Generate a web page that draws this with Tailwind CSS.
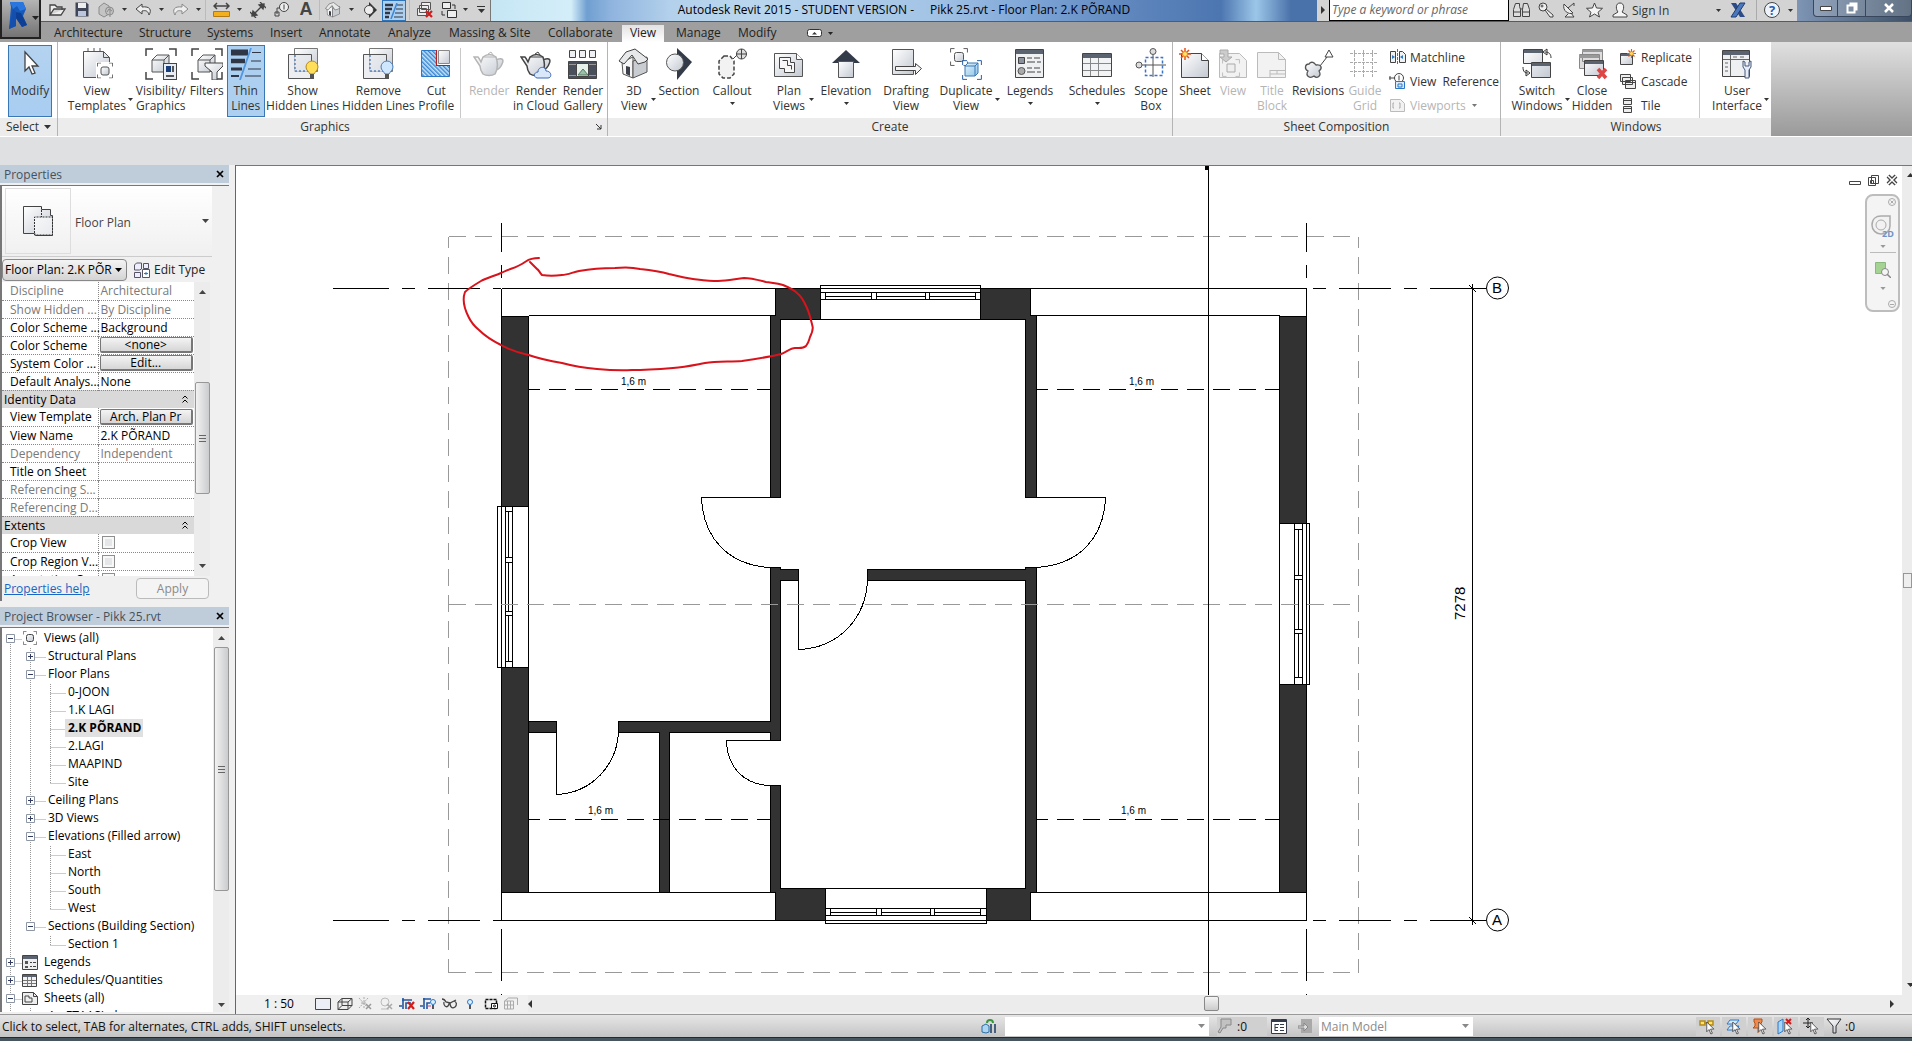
<!DOCTYPE html>
<html lang="en">
<head>
<meta charset="utf-8">
<title>Autodesk Revit 2015</title>
<script src="https://cdn.jsdelivr.net/npm/@tailwindcss/browser@4"></script>
</head>
<body class="flex h-screen flex-col overflow-hidden bg-[#f0f0f0] font-['Open_Sans','Noto_Sans',sans-serif] text-[12px] leading-[15px] text-[#222]">

<svg class="absolute h-0 w-0" aria-hidden="true">
  <defs>
    <linearGradient id="g" x1="0" y1="0" x2="1" y2="1"><stop offset="0" stop-color="#fff"/><stop offset="1" stop-color="#c3c9d2"/></linearGradient>
    <linearGradient id="gb" x1="0" y1="0" x2="1" y2="1"><stop offset="0" stop-color="#e3f3fc"/><stop offset="1" stop-color="#8cc4e8"/></linearGradient>
    <pattern id="hatch" width="3" height="3" patternUnits="userSpaceOnUse" patternTransform="rotate(-45)"><rect width="3" height="3" fill="#cfe5f7"/><rect width="1.5" height="3" fill="#3a8ad6"/></pattern>
    <symbol id="dn" viewBox="0 0 7 4"><path d="M0 0h7L3.5 4z" fill="currentColor"/></symbol>
    <symbol id="plus" viewBox="0 0 9 9"><path d="M.5.5h8v8h-8z" fill="#fff" stroke="#8c96a5"/><path d="M2 4.500h5M4.500 2v5" stroke="#333c60"/></symbol>
    <symbol id="minus" viewBox="0 0 9 9"><path d="M.5.5h8v8h-8z" fill="#fff" stroke="#8c96a5"/><path d="M2 4.500h5" stroke="#333c60"/></symbol>
    <symbol id="cursor" viewBox="0 0 12 18"><path d="M1 1v13l3-3 2.500 6 2-1L6 10.500h4.500z" fill="#fff" stroke="#333"/></symbol>
    <symbol id="sun" viewBox="0 0 12 12"><path d="M6 0v12M0 6h12M2 2l8 8M10 2l-8 8" stroke="#e2521b" stroke-width="1.500"/><circle cx="6" cy="6" r="2.500" fill="#ffe46b" stroke="#e88a1c"/></symbol>
    <symbol id="frame" viewBox="0 0 32 32"><path d="M1 8V1h7M24 1h7v7M31 24v7h-7M8 31H1v-7" fill="none" stroke="currentColor" stroke-width="1.500"/></symbol>
    <symbol id="house" viewBox="0 0 32 32"><path d="M4 14l11-5v21L5 26z" fill="#f5f5f5" stroke="#555"/><path d="M15 13l14-4v15l-14 6z" fill="#c9ccd1" stroke="#555"/><path d="M1 13L8 4l9-3 13 10-3 3-7 2-6-9-8 9z" fill="#e6e8ea" stroke="#444"/><path d="M8 18l4 1v9l-4-2z" fill="#3b3f49"/></symbol>
    <symbol id="teapot" viewBox="0 0 32 32"><path d="M10 9c4-3 9-3 13 0 2 6 2 12-1 17-3 2-9 2-12 0-2-3-3-6-3-8C5 15 3 12 1 9l4 0c1 1 2 3 3 5zM23 12c7-3 8 0 6 4-1 3-3 5-6 6" fill="url(#g)" stroke="currentColor" stroke-width="1.500"/><path d="M10 9h13M15 6l3-2 2 3" fill="none" stroke="currentColor"/></symbol>
  </defs>
</svg>

<!-- Title bar -->
<header class="relative z-10 flex h-[22px] shrink-0 border-b border-[#525c68] bg-[#d3d3d3]">
  <button aria-label="Application menu" class="flex h-[39px] w-[41px] shrink-0 items-start gap-1 border-2 border-t-0 border-[#222] bg-linear-to-b from-[#b4b4b4] to-[#747474] pl-[5px]">
    <svg width="21" height="30" viewBox="0 0 21 30"><path d="M3 2l13 0 3 7-3 7 4 9-5 2-6-10v9l-7 3L4 7z" fill="#1659b8"/><path d="M3 2h13l3 7-6 2-3-5-4 3z" fill="#2a76df"/><path d="M8 12l6 1 6 12-5 2-7-10z" fill="#0d3f96"/><path d="M2 29l4-20 3 3v14z" fill="#144fae"/></svg>
    <svg class="mt-4 text-[#222]" width="7" height="4"><use href="#dn"/></svg>
  </button>
  <div class="flex h-[21px] w-[449px] shrink-0 items-center pb-[2px] pl-[5px] text-[#333]">
    <button aria-label="Open" class="flex w-6 justify-center"><svg width="18" height="14" fill="none" stroke="#444" stroke-width="1.300"><path d="M1 12V2h5l2 2h5v3M1 12h11l4-6H5z" fill="#eee"/></svg></button>
    <button aria-label="Save" class="flex w-6 justify-center"><svg width="14" height="15"><path d="M.5.5h11l2 2v12H.5z" fill="#3f4658"/><path d="M3 1h8v5H3z" fill="#eee"/><path d="M3 9h8v5H3z" fill="#b9c6dd"/></svg></button>
    <button aria-label="Synchronize" class="flex w-6 justify-center"><svg width="17" height="16" fill="#c4c4c4" stroke="#8b8b8b"><path d="M1 5l5-4 5 3v8l-5 3-5-3z"/><circle cx="11.500" cy="9" r="4"/><path d="M9 10l2-3 3 2M12 5v10"/></svg></button>
    <span class="flex w-[13px] justify-center"><svg width="5" height="3"><use href="#dn"/></svg></span>
    <button aria-label="Undo" class="flex w-6 justify-center"><svg width="17" height="14"><path d="M7 1L1 6l6 5V8c4-1 6 0 7 4 3-5 1-9-7-8z" fill="#eee" stroke="#444"/></svg></button>
    <span class="flex w-[13px] justify-center"><svg width="5" height="3"><use href="#dn"/></svg></span>
    <button aria-label="Redo" class="flex w-6 justify-center"><svg width="17" height="14"><path d="M10 1l6 5-6 5V8C6 7 4 8 3 12 0 7 2 3 10 4z" fill="#eee" stroke="#888"/></svg></button>
    <span class="flex w-[13px] justify-center"><svg width="5" height="3"><use href="#dn"/></svg></span>
    <span class="mr-[3px] h-5 w-px bg-[#bbb]"></span>
    <button aria-label="Measure" class="flex w-6 justify-center"><svg width="17" height="15"><path d="M1 4h15M4 1L1 4l3 3M13 1l3 3-3 3" fill="none" stroke="#444" stroke-width="1.500"/><path d="M.5 9.500h16v5H.5z" fill="#f2b01e" stroke="#b27a10"/></svg></button>
    <span class="flex w-[13px] justify-center"><svg width="5" height="3"><use href="#dn"/></svg></span>
    <button aria-label="Aligned dimension" class="flex w-6 justify-center"><svg width="16" height="16" stroke="#444" stroke-width="1.300" fill="#444"><path d="M2 14L14 2M0 10l6 6M10 0l6 6"/><path d="M2 14l1-5 4 4zM14 2l-1 5-4-4z"/></svg></button>
    <button aria-label="Tag" class="flex w-6 justify-center"><svg width="16" height="15" fill="none" stroke="#444"><circle cx="10" cy="5" r="4.500" fill="#eee"/><path d="M10 2.500v5M6 6H3v6M1 10h4v4H1z"/></svg></button>
    <button aria-label="Text" class="flex w-6 justify-center font-['Liberation_Sans',sans-serif] text-[18px] font-bold text-[#444]">A</button>
    <span class="mx-px h-5 w-px bg-[#bbb]"></span>
    <button aria-label="Default 3D view" class="flex w-6 justify-center"><svg width="16" height="16" viewBox="0 0 32 32"><use href="#house"/></svg></button>
    <span class="flex w-[13px] justify-center"><svg width="5" height="3"><use href="#dn"/></svg></span>
    <button aria-label="Section" class="flex w-6 justify-center"><svg width="14" height="16"><path d="M6 0l8 8-8 8z" fill="#333"/><circle cx="6" cy="8" r="4.500" fill="#eee" stroke="#444"/></svg></button>
    <button aria-label="Thin Lines" class="mt-[2px] flex h-[21px] w-6 items-center justify-center border border-[#2f74b8] bg-[#aed0f0]"><svg width="18" height="16" stroke="#2f3645"><path d="M0 2h8M0 6h7M0 10h5M0 14h4" stroke-width="2.500"/><path d="M12 2h6M11 6h7M10 10h8M9 14h9"/><path d="M12 0L6 16" stroke="#3c86d8" stroke-width="1.500"/></svg></button>
    <span class="mx-[3px] h-5 w-px bg-[#bbb]"></span>
    <button aria-label="Close hidden" class="flex w-6 justify-center"><svg width="17" height="16" fill="#eee" stroke="#555"><path d="M4.500.5h9v7h-9zM2.500 3.500h9v7h-9zM.5 6.500h9v7h-9z"/><path d="M9 9l6 6M15 9l-6 6" stroke="#d21c1c" stroke-width="2.200"/></svg></button>
    <button aria-label="Switch windows" class="flex w-6 justify-center"><svg width="17" height="16" fill="#eee" stroke="#333"><path d="M1.500.5h8v6h-8zM6.500 8.500h9v7h-9z"/><path d="M11 3h3v4M1 9v4h3" fill="none"/></svg></button>
    <span class="flex w-2 justify-center"><svg width="5" height="3"><use href="#dn"/></svg></span>
    <button aria-label="Customize" class="ml-2 flex flex-col items-center gap-[2px]"><span class="h-px w-2 bg-[#333]"></span><svg width="7" height="4"><use href="#dn"/></svg></button>
  </div>
  <div class="flex min-w-0 flex-1 items-center justify-center gap-4 overflow-hidden border-l border-[#777] bg-[linear-gradient(90deg,#c6e6f4_0,#d4eef9_80px,#6f9fd0_96px,#8fb4de_120px,#b4d1ec_180px,#b9d6ee_260px,#a4c4e6_440px,#7da5d6_540px,#5f86bd_640px,#4c76b0_730px,#9cc6e8_765px,#4a72aa_800px)] pb-[2px] whitespace-pre text-black">
    <span>Autodesk Revit 2015 - STUDENT VERSION -</span><span>Pikk 25.rvt - Floor Plan: 2.K PÕRAND</span>
  </div>
  <div class="flex w-[480px] shrink-0 items-center pb-px text-[#333]">
    <span class="flex w-3 justify-center"><svg width="4" height="8"><path d="M0 0l4 4-4 4z" fill="#333"/></svg></span>
    <input aria-label="Search" placeholder="Type a keyword or phrase" class="h-[21px] w-[180px] border border-t-0 border-black bg-white px-[2px] italic placeholder:text-[#666]">
    <button aria-label="Find" class="ml-1 flex w-[25px]"><svg width="17" height="16" fill="#ddd" stroke="#444"><path d="M2.500 1.500h4v3l1 3v7h-7v-7zM10.500 1.500h4l2 6v7h-7v-7zM7 7h3M1 10h6M10 10h6"/></svg></button>
    <button aria-label="Key" class="flex w-6"><svg width="17" height="16" fill="#eee" stroke="#444"><circle cx="5" cy="5" r="4"/><path d="M8 7l7 6v2h-3l-5-7z"/><circle cx="4" cy="4" r="1"/></svg></button>
    <button aria-label="Communication" class="flex w-6"><svg width="15" height="16" fill="#eee" stroke="#444"><path d="M2 2l9 9c-4 2-11-2-9-9zM6 6l6-5M12 1v3M6 12l-3 3h9l-3-4"/></svg></button>
    <button aria-label="Favorites" class="flex w-[26px]"><svg width="17" height="16"><path d="M8.500 1l2 5 6 .3-4.500 4L13.500 15l-5-3-5 3L5 10.300.5 6.300l6-.3z" fill="#f5f5f5" stroke="#444"/></svg></button>
    <button class="flex w-[104px] items-center gap-1"><svg width="16" height="16" fill="#f5f5f5" stroke="#444"><path d="M8 1c5 0 4 7 2 9l5 3v2H1v-2l5-3C4 8 3 1 8 1z"/></svg>Sign In</button>
    <svg width="5" height="3"><use href="#dn"/></svg>
    <button aria-label="Exchange" class="ml-[9px] w-[26px]"><svg width="16" height="16"><path d="M1 1h5l9 14h-5z" fill="#2b4c86"/><path d="M10 1h5L6 15H1z" fill="#4a78bd" stroke="#1f3c70"/></svg></button>
    <span class="h-5 w-px bg-[#aaa]"></span>
    <button aria-label="Help" class="ml-[7px] flex h-4 w-4 items-center justify-center rounded-full border border-[#444] bg-[#eef4fb] text-[13px] font-bold text-[#2b5ba8]">?</button>
    <svg class="ml-2" width="5" height="3"><use href="#dn"/></svg>
  </div>
  <div class="flex w-[115px] shrink-0 bg-linear-to-r from-[#7e95b4] to-[#3c4f66] pl-4">
    <div class="flex h-[17px] flex-1 rounded-b border border-t-0 border-[#38475c] bg-white/20 text-white">
      <button aria-label="Minimize" class="flex w-6 items-end justify-center border-r border-[#38475c] pb-[5px]"><svg width="12" height="5"><path d="M.5.5h11v4H.5z" fill="#fff" stroke="#444"/></svg></button>
      <button aria-label="Restore" class="flex w-7 items-center justify-center border-r border-[#38475c]"><svg width="12" height="12" fill="none"><path d="M3.500 1.500h7v7M1.500 3.500h7v7h-7z" stroke="#fff" stroke-width="2"/></svg></button>
      <button aria-label="Close" class="flex flex-1 items-center justify-center"><svg width="12" height="10"><path d="M2 1l8 8M10 1L2 9" stroke="#fff" stroke-width="2.500"/></svg></button>
    </div>
  </div>
</header>

<!-- Ribbon tabs -->
<nav class="flex h-5 shrink-0 items-end bg-[#9f9f9f] pl-[54px] whitespace-nowrap text-[#222]">
  <a href="#" class="w-[85px] pb-[2px]">Architecture</a>
  <a href="#" class="w-[68px] pb-[2px]">Structure</a>
  <a href="#" class="w-[63px] pb-[2px]">Systems</a>
  <a href="#" class="w-[49px] pb-[2px]">Insert</a>
  <a href="#" class="w-[69px] pb-[2px]">Annotate</a>
  <a href="#" class="w-[61px] pb-[2px]">Analyze</a>
  <a href="#" class="w-[99px] pb-[2px]">Massing &amp; Site</a>
  <a href="#" class="w-[74px] pb-[2px]">Collaborate</a>
  <a href="#" class="h-[17px] w-[42px] bg-linear-to-b from-[#e2e2e2] to-white text-center">View</a>
  <a href="#" class="ml-3 w-[62px] pb-[2px]">Manage</a>
  <a href="#" class="w-[69px] pb-[2px]">Modify</a>
  <button aria-label="Minimize ribbon" class="flex items-center gap-[6px] pb-[5px]"><svg width="15" height="8"><rect x=".5" y=".5" width="14" height="7" rx="2" fill="#fff" stroke="#333"/><path d="M5 5.500h5L7.500 3z" fill="#333"/></svg><svg width="5" height="3"><use href="#dn"/></svg></button>
</nav>

<!-- Ribbon -->
<section class="flex h-[94px] shrink-0 bg-linear-to-b from-[#e0e0e0] to-[#9a9a9a] whitespace-nowrap text-[#333]">
  <div class="flex w-[58px] flex-col border-r border-[#b4b4b4] bg-white">
    <div class="flex h-[76px] pt-[3px] pl-2">
      <button class="flex h-[72px] w-11 flex-col items-center border border-[#3a78b5] bg-linear-to-b from-[#b4d3f0] to-[#a8cdf0] pt-[2px]"><svg width="32" height="32"><path d="M11 4v19l4-4 3 7 3-1-3-7h6z" fill="#fff" stroke="#444" stroke-width="1.300"/></svg><span class="mt-[3px]">Modify</span></button>
    </div>
    <button class="flex h-[18px] items-center gap-[5px] bg-[#ececec] pb-px pl-[6px]">Select <svg width="7" height="4"><use href="#dn"/></svg></button>
  </div>

  <div class="flex w-[550px] flex-col border-r border-[#b4b4b4] bg-white">
    <div class="flex h-[76px] items-start pt-[6px] pl-[6px]">
      <button class="flex w-[66px] flex-col items-center"><svg width="32" height="32"><path d="M2.500 3.500h20l6 6v20h-26z" fill="url(#g)" stroke="#555"/><path d="M22.500 3.500v6h6M7 0v4M13 0v4M19 0v4" fill="none" stroke="#555"/><path d="M15 14h16v17H15z" fill="#fff"/><svg x="16" y="14" width="16" height="17" viewBox="0 0 32 32" class="text-[#444]"><use href="#frame"/></svg><rect x="20" y="19" width="8" height="8" rx="2" fill="url(#g)" stroke="#555"/></svg><span class="mt-[3px]">View</span><span class="flex items-start">Templates<svg class="-mr-[7px] ml-[2px]" width="5" height="3"><use href="#dn"/></svg></span></button>
      <button class="flex w-[62px] flex-col items-center"><svg width="32" height="32" class="text-[#444]"><use href="#frame"/><path d="M7 12l5-5h12v12l-5 5H7zM7 12h12v12M19 12l5-5" fill="url(#g)" stroke="#555"/><rect x="18.500" y="15.500" width="13" height="16" fill="#e8edf3" stroke="#444"/><path d="M21 18h5v6h-5z" fill="#173d7a"/><path d="M28 18v6M21 28h8" stroke="#555" stroke-width="2"/></svg><span class="mt-[3px]">Visibility/</span><span>Graphics</span></button>
      <button class="flex w-[30px] flex-col items-center"><svg width="32" height="32" class="text-[#444]"><use href="#frame"/><path d="M7 12l5-5h12v12l-5 5H7zM7 12h12v12M19 12l5-5" fill="url(#g)" stroke="#555"/><path d="M14 15h18v3l-6 6v8h-5v-8l-7-6z" fill="url(#g)" stroke="#444"/></svg><span class="mt-[3px]">Filters</span></button>
      <button class="-mt-[3px] ml-[5px] flex h-[72px] w-[38px] flex-col items-center border border-[#3a78b5] bg-[#aed0f0] pt-[2px]"><svg width="32" height="32" stroke="#2f3645"><path d="M1 4.500h17" stroke-width="6"/><path d="M1 13h14" stroke-width="4.500"/><path d="M1 21h11" stroke-width="3"/><path d="M1 28h8" stroke-width="2"/><path d="M22 4.500h9M21 13h10M18 21h13M15 28h16"/><path d="M21 0l-11 32" stroke="#5196e0" stroke-width="1.800"/></svg><span class="mt-[3px]">Thin</span><span>Lines</span></button>
      <button class="flex w-[76px] flex-col items-center"><svg width="32" height="32"><path d="M7.500.5h23v23h-23z" fill="url(#g)" stroke="#777"/><path d="M1.500 6.500h23v24h-23z" fill="#e4e7eb" stroke="#555" fill-opacity=".7"/><path d="M8 7v16h16" fill="none" stroke="#1d56a8" stroke-dasharray="2 2"/><path d="M23 26c-1-2-4-4-4-7a6 6 0 0 1 12 0c0 3-3 5-4 7z" fill="#ffdf5a" stroke="#b48a1a"/><path d="M23 26h4v5h-4z" fill="#555"/></svg><span class="mt-[3px]">Show</span><span>Hidden Lines</span></button>
      <button class="flex w-[76px] flex-col items-center"><svg width="32" height="32"><path d="M7.500.5h23v23h-23z" fill="url(#g)" stroke="#777"/><path d="M1.500 6.500h23v24h-23z" fill="#e4e7eb" stroke="#555" fill-opacity=".7"/><path d="M8 7v16h16" fill="none" stroke="#1d56a8" stroke-dasharray="2 2"/><path d="M23 26c-1-2-4-4-4-7a6 6 0 0 1 12 0c0 3-3 5-4 7z" fill="#cfe6ff" stroke="#4a7cc0"/><path d="M23 26h4v5h-4z" fill="#555"/></svg><span class="mt-[3px]">Remove</span><span>Hidden Lines</span></button>
      <button class="flex w-10 flex-col items-center"><svg width="32" height="32"><path d="M1.500 2.500h28v26h-28z" fill="url(#hatch)" stroke="#2a79c9"/><path d="M17 0h15v18H17z" fill="#fff"/><path d="M18.500 2.500h11v13h-11z" fill="url(#g)" stroke="#888"/><path d="M16.500 2v15.500H30" fill="none" stroke="#b31f1f" stroke-width="1.200"/></svg><span class="mt-[3px]">Cut</span><span>Profile</span></button>
      <span class="mx-1 h-[70px] w-px bg-[#c9c9c9]"></span>
      <button disabled class="flex w-12 flex-col items-center text-[#b5b5b5]"><svg width="32" height="32"><use href="#teapot"/></svg><span class="mt-[3px]">Render</span></button>
      <button class="flex w-[46px] flex-col items-center"><svg width="32" height="32" class="text-[#444]"><use href="#teapot"/><path d="M17 30c-4-1-3-6 1-6 0-6 8-6 8-1 6 0 6 7 2 7z" fill="#d9e7fa" stroke="#3a66b5"/></svg><span class="mt-[3px]">Render</span><span>in Cloud</span></button>
      <button class="flex w-12 flex-col items-center"><svg width="32" height="32" fill="#eef0f3" stroke="#444"><path d="M2.500 2.500h6v7h-6zM12.500 2.500h6v7h-6zM22.500 2.500h6v7h-6z"/><path d="M1.500 13.500h28v17h-28z" fill="#4a4f5c"/><path d="M2 16.500h27M2 27.500h27" stroke="#999"/><path d="M9.500 15.500h12v13h-12z" fill="#e7f2ea"/><path d="M11 27l5-6 5 6z" fill="#9bc0a6" stroke="#576"/></svg><span class="mt-[3px]">Render</span><span>Gallery</span></button>
    </div>
    <div class="flex h-[18px] items-center bg-[#ececec] pr-[5px] pb-px pl-3"><span class="flex-1 -translate-x-2 text-center">Graphics</span><svg width="6" height="6"><path d="M0 0l5 5M5 1v4H1" fill="none" stroke="#333"/></svg></div>
  </div>

  <div class="flex w-[565px] flex-col border-r border-[#b4b4b4] bg-white">
    <div class="flex h-[76px] items-start pt-[6px] pl-px">
      <button class="flex w-[50px] flex-col items-center"><svg width="32" height="32"><use href="#house"/></svg><span class="mt-[3px]">3D</span><span class="flex items-start">View<svg class="-mr-[9px] ml-1" width="5" height="3"><use href="#dn"/></svg></span></button>
      <button class="flex w-10 flex-col items-center"><svg width="32" height="32"><path d="M14 0l15 14-15 18z" fill="#333a48"/><circle cx="12" cy="14.500" r="8.500" fill="url(#g)" stroke="#555"/></svg><span class="mt-[3px]">Section</span></button>
      <button class="flex w-[66px] flex-col items-center"><svg width="32" height="32" fill="none" stroke="#444"><path d="M8 8h6l4 5v13l-4 4H7l-4-4V13z" stroke-dasharray="4 2" stroke-width="1.500" fill="#f2f2f2"/><path d="M17 11l5-5"/><circle cx="25.500" cy="6" r="5" fill="#ddd"/><path d="M20 6h11M25.500 1v10"/></svg><span class="mt-[3px]">Callout</span><svg class="mt-1" width="5" height="3"><use href="#dn"/></svg></button>
      <button class="flex w-12 flex-col items-center"><svg width="32" height="32"><path d="M1.500 5.500h22l6 6v17h-28z" fill="url(#g)" stroke="#555"/><path d="M23.500 5.500v6h6" fill="#fff" stroke="#555"/><path d="M6.500 9.500h11v5h4v10h-10v-4h-5z" fill="#f8f8f8" stroke="#444"/><path d="M9.500 12.500h5v5h4v4" fill="none" stroke="#444"/></svg><span class="mt-[3px]">Plan</span><span class="flex items-start">Views<svg class="-mr-[9px] ml-1" width="5" height="3"><use href="#dn"/></svg></span></button>
      <button class="flex w-[66px] flex-col items-center"><svg width="32" height="32"><path d="M16 2l14 13H2z" fill="#333a48"/><path d="M8.500 13.500h15v16h-15z" fill="url(#g)" stroke="#555"/></svg><span class="mt-[3px]">Elevation</span><svg class="mt-1" width="5" height="3"><use href="#dn"/></svg></button>
      <button class="flex w-[54px] flex-col items-center"><svg width="32" height="32"><path d="M2.500 1.500h21v25h-21z" fill="url(#g)" stroke="#555"/><path d="M5.500 18.500h20v-3l6 5-6 6v-4h-20z" fill="#f4f4f4" stroke="#444"/></svg><span class="mt-[3px]">Drafting</span><span>View</span></button>
      <button class="flex w-[66px] flex-col items-center"><svg width="32" height="32"><svg width="18" height="18" viewBox="0 0 32 32" class="text-[#444]"><use href="#frame"/></svg><rect x="4.500" y="4.500" width="9" height="9" rx="2" fill="url(#g)" stroke="#555"/><svg x="12" y="12" width="20" height="20" viewBox="0 0 32 32" class="text-[#1d56a8]"><use href="#frame"/></svg><path d="M15 18l3-3h10v10l-3 3H15zM15 18h10v10M25 18l3-3" fill="url(#gb)" stroke="#3a78b5"/></svg><span class="mt-[3px]">Duplicate</span><span class="flex items-start">View<svg class="-mr-[21px] ml-4" width="5" height="3"><use href="#dn"/></svg></span></button>
      <button class="flex w-[62px] flex-col items-center"><svg width="32" height="32"><path d="M1.500 1.500h28v28h-28z" fill="#eef0f2" stroke="#444"/><path d="M2 2h27v4H2z" fill="#5b6270"/><path d="M4.500 9.500h6v6h-6z" fill="#8b919c" stroke="#444"/><circle cx="7.500" cy="23" r="3.500" fill="#aaa" stroke="#555"/><path d="M13 10h5m2 0h6M13 14h8m2 0h4M13 20h5m2 0h6M13 24h8m2 0h4" stroke="#444"/></svg><span class="mt-[3px]">Legends</span><svg class="mt-1" width="5" height="3"><use href="#dn"/></svg></button>
      <button class="flex w-[72px] flex-col items-center"><svg width="32" height="32"><path d="M1.500 5.500h29v23h-29z" fill="#f2f3f4" stroke="#444"/><path d="M2 6h28v4H2z" fill="#5b6270"/><path d="M2 15.500h28M2 22.500h28M9.500 10v18M17.500 10v18" stroke="#888"/></svg><span class="mt-[3px]">Schedules</span><svg class="mt-1" width="5" height="3"><use href="#dn"/></svg></button>
      <button class="flex w-9 flex-col items-center"><svg width="32" height="32" fill="none" stroke="#555"><circle cx="18" cy="3.500" r="3" fill="#ddd"/><circle cx="4" cy="17" r="3" fill="#ddd"/><path d="M18 7v22M7 17h24"/><path d="M10.500 9.500h17v18h-17z" stroke="#3a74c9" stroke-dasharray="3 2" stroke-width="1.500"/></svg><span class="mt-[3px]">Scope</span><span>Box</span></button>
    </div>
    <div class="flex h-[18px] items-center justify-center bg-[#ececec] pb-px">Create</div>
  </div>

  <div class="flex w-[328px] flex-col border-r border-[#b4b4b4] bg-white">
    <div class="flex h-[76px] items-start pt-[6px] pl-[2px]">
      <button class="flex w-10 flex-col items-center"><svg width="32" height="32"><path d="M2.500 5.500h20l7 7v17h-27z" fill="url(#g)" stroke="#444"/><path d="M22.500 5.500v7h7" fill="#fff" stroke="#444"/><use href="#sun" width="12" height="12"/></svg><span class="mt-[3px]">Sheet</span></button>
      <button disabled class="flex w-9 flex-col items-center text-[#b5b5b5]"><svg width="32" height="32"><path d="M2.500 5.500h20l7 7v17h-27z" fill="#f2f2f2" stroke="#bbb"/><svg x="5" y="11" width="18" height="18" viewBox="0 0 32 32"><use href="#frame"/></svg><path d="M10 16h8v8h-8z" fill="#eee" stroke="#aaa"/><path d="M3 2h8v7h4l-6 5-6-5h4V6H3z" fill="#ccc" stroke="#aaa"/></svg><span class="mt-[3px]">View</span></button>
      <button disabled class="flex w-[42px] flex-col items-center text-[#b5b5b5]"><svg width="32" height="32"><path d="M1.500 4.500h21l7 7v18h-28z" fill="#f2f2f2" stroke="#bbb"/><path d="M22.500 4.500v7h7M14 22.500h15M14 26h15M14 22v7M21 22v4" fill="none" stroke="#bbb"/></svg><span class="mt-[3px]">Title</span><span>Block</span></button>
      <button class="flex w-[50px] flex-col items-center"><svg width="32" height="32"><path d="M27 2l4 7h-8zM25 9l-7 9" fill="none" stroke="#444"/><path d="M7 16c3-4 6 0 7 1 5-1 7 3 3 6 3 5-2 8-5 5-4 3-9 0-6-5-4-2-3-7 1-7z" fill="url(#g)" stroke="#555" stroke-width="1.300"/></svg><span class="mt-[3px]">Revisions</span></button>
      <button disabled class="flex w-11 flex-col items-center text-[#b5b5b5]"><svg width="32" height="32" fill="none" stroke="#aaa" stroke-dasharray="3 1"><path d="M5.500 2v28M14.500 2v28M23.500 2v28M1 5.500h28M1 14.500h28M1 23.500h28"/></svg><span class="mt-[3px]">Guide</span><span>Grid</span></button>
      <div class="ml-[2px] flex flex-col gap-2">
        <button class="flex h-4 items-center gap-1 pt-[2px]"><svg width="17" height="16"><path d="M1.500 2.500h5v11h-5zM10.500 2.500h3l3 3v8h-6z" fill="#f2f2f2" stroke="#444"/><path d="M8.500 0v16" stroke="#2a79c9" stroke-dasharray="3 1"/><path d="M3 6l3 2-3 2zM14 6l-3 2 3 2z" fill="#2a79c9"/></svg>Matchline</button>
        <button class="flex h-4 items-center gap-1 pt-[2px]"><svg width="17" height="16" fill="none" stroke="#444"><circle cx="10" cy="5" r="4.500"/><path d="M0 5h6M1 3v4M10 2.500v5"/><path d="M6.500 8.500h9v7h-9zM9 11h4v3H9z" fill="#dcebfa" stroke="#2a79c9"/></svg>View&nbsp; Reference</button>
        <button disabled class="flex h-4 items-center gap-1 pt-[2px] text-[#b5b5b5]"><svg width="17" height="16"><path d="M1.500 2.500h10l4 4v8h-14z" fill="#f2f2f2" stroke="#bbb"/><path d="M5 6H4v5h1M10 6h1v5h-1" fill="none" stroke="#aaa"/></svg>Viewports<svg class="ml-[2px] text-[#777]" width="5" height="3"><use href="#dn"/></svg></button>
      </div>
    </div>
    <div class="flex h-[18px] items-center justify-center bg-[#ececec] pb-px">Sheet Composition</div>
  </div>

  <div class="flex w-[270px] flex-col bg-white">
    <div class="flex h-[76px] items-start pt-[6px] pl-1">
      <button class="flex w-16 flex-col items-center"><svg width="32" height="32"><path d="M2.500 1.500h19v14h-19zM10.500 14.500h19v15h-19z" fill="url(#g)" stroke="#444"/><path d="M3 2h18v3H3zM11 15h18v3H11z" fill="#5b6270"/><path d="M24 4c4 0 6 2 6 6M22 4l4-3v6zM2 19c0 5 2 6 5 6M5 22l4 3-4 3z" fill="none" stroke="#333"/></svg><span class="mt-[3px]">Switch</span><span class="flex items-start">Windows<svg class="-mr-[7px] ml-[2px]" width="5" height="3"><use href="#dn"/></svg></span></button>
      <button class="flex w-[46px] flex-col items-center"><svg width="32" height="32"><path d="M6.500 1.500h20v12h-20zM3.500 6.500h20v14h-20z" fill="#ddd" stroke="#888"/><path d="M6 2h20v2H6zM3 7h20v3H3z" fill="#999"/><path d="M8.500 12.500h19v15h-19z" fill="url(#g)" stroke="#444"/><path d="M9 13h18v3H9z" fill="#5b6270"/><path d="M22 21l8 9M30 21l-8 9" stroke="#e04545" stroke-width="3.500"/></svg><span class="mt-[3px]">Close</span><span>Hidden</span></button>
      <div class="ml-1 flex w-20 flex-col gap-2">
        <button class="flex h-4 items-center gap-[5px] pt-[2px]"><svg width="17" height="16"><path d="M1.500 4.500h12v11h-12z" fill="url(#g)" stroke="#444"/><path d="M2 5h11v2H2z" fill="#5b6270"/><use href="#sun" x="8" width="9" height="9"/></svg>Replicate</button>
        <button class="flex h-4 items-center gap-[5px] pt-[2px]"><svg width="17" height="16" fill="#eee" stroke="#444"><path d="M1.500 1.500h10v7h-10zM3.500 4.500h10v7h-10zM6.500 7.500h10v8h-10z"/><path d="M7 9.500h9"/></svg>Cascade</button>
        <button class="flex h-4 items-center gap-[5px] pt-[2px]"><svg width="17" height="16" fill="#eee" stroke="#444"><path d="M4.500 1.500h8v6h-8zM4.500 9.500h8v6h-8zM5 3.500h7M5 11.500h7"/></svg>Tile</button>
      </div>
      <span class="h-[70px] w-px bg-[#c9c9c9]"></span>
      <button class="ml-1 flex w-[66px] flex-col items-center"><svg width="32" height="32"><path d="M1.500 2.500h27v26h-27z" fill="#eef0f2" stroke="#444"/><path d="M2 3h26v4H2z" fill="#5b6270"/><path d="M9.500 7v21M2 11.500h26M4 15h3M4 19h3M4 23h3M12 9h4M19 9h4" stroke="#666"/><path d="M22 13v6l2 3v8h4v-8l2-3v-6l-2 1v4h-4v-4z" fill="#e6edf7" stroke="#44597c"/></svg><span class="mt-[3px]">User</span><span class="flex items-start">Interface<svg class="-mr-[7px] ml-[2px]" width="5" height="3"><use href="#dn"/></svg></span></button>
    </div>
    <div class="flex h-[18px] items-center justify-center bg-[#ececec] pb-px">Windows</div>
  </div>
</section>

<div class="h-[29px] shrink-0 border-t border-white bg-[#dfe0e2]"></div>

<main class="flex min-h-0 flex-1">
  <aside class="flex w-[235px] shrink-0 flex-col pr-[6px]">
    <!-- Properties -->
    <section class="flex h-[436px] shrink-0 flex-col">
      <h2 class="flex h-[18px] shrink-0 items-center justify-between bg-[#bfcddb] px-1 text-[#46515c]">Properties<button aria-label="Close properties" class="pr-px"><svg width="8" height="8"><path d="M1 1l6 6M7 1L1 7" stroke="#000" stroke-width="1.700"/></svg></button></h2>
      <div class="mt-[2px] flex min-h-0 flex-1 flex-col border-t border-l-2 border-[#777] bg-[#f0f0f0]">
        <button class="mr-[17px] flex h-[71px] shrink-0 items-center border-b border-[#ccc] bg-linear-to-b from-white to-[#f0f0f0] pl-[3px] text-[#444]">
          <span class="flex h-[66px] w-[66px] items-center justify-center border border-[#ddd]"><svg width="32" height="32"><path d="M1.500 1.500h18v3h9v6h2v20h-17v-2h-12z" fill="url(#g)" stroke="#444"/><path d="M12.500 28v-16h18v18h-18z" fill="#fff" fill-opacity=".6" stroke="#333" stroke-dasharray="2 1"/><path d="M19.500 2v10" stroke="#333" stroke-dasharray="2 1"/></svg></span>
          <span class="ml-1 flex-1 pt-[2px] text-left">Floor Plan</span><svg class="mr-[3px]" width="7" height="4"><use href="#dn"/></svg>
        </button>
        <div class="flex h-[25px] shrink-0 items-center">
          <select aria-label="Instance" class="h-[22px] w-[125px] appearance-none rounded-sm border border-[#888] bg-[linear-gradient(#f4f4f4,#d4d4d4)] pr-3 pl-[2px] text-black"><option>Floor Plan: 2.K PÕR</option></select>
          <svg class="-ml-[12px] text-black" width="7" height="4"><use href="#dn"/></svg>
          <button class="ml-3 flex items-center gap-1 text-[#222]"><svg width="16" height="16" fill="#eef" stroke="#556"><path d="M.5 3l2-2h5v6l-2 1h-5zM9.500 1.500h5v5h-5zM.5 10.500h6v5h-6z"/><path d="M8.500 7.500h7v8h-7z" fill="#fff"/><path d="M10 11.500h4M12 10v3" stroke="#2a79c9"/></svg>Edit Type</button>
        </div>
        <div class="flex min-h-0 flex-1 overflow-hidden text-black">
          <div class="w-[192px] overflow-hidden bg-white">
            <table class="w-full table-fixed border-collapse leading-[17px] whitespace-nowrap">
              <colgroup><col class="w-[96px]"><col></colgroup>
              <tbody>
                <tr class="h-[18px] border-b border-dotted border-[#888] text-[#7a7a7a]"><td class="border-r border-dotted border-[#888] pl-2">Discipline</td><td class="pl-[2px]">Architectural</td></tr>
                <tr class="h-[18px] border-b border-dotted border-[#888] text-[#7a7a7a]"><td class="border-r border-dotted border-[#888] pl-2">Show Hidden ...</td><td class="pl-[2px]">By Discipline</td></tr>
                <tr class="h-[18px] border-b border-dotted border-[#888]"><td class="border-r border-dotted border-[#888] pl-2">Color Scheme ...</td><td class="pl-[2px]">Background</td></tr>
                <tr class="h-[18px] border-b border-dotted border-[#888]"><td class="border-r border-dotted border-[#888] pl-2">Color Scheme</td><td class="px-px"><button class="block h-4 w-full rounded-xs border-2 border-t border-l border-[#777] bg-linear-to-b from-[#f4f4f4] to-[#d6d6d6] leading-[13px]">&lt;none&gt;</button></td></tr>
                <tr class="h-[18px] border-b border-dotted border-[#888]"><td class="border-r border-dotted border-[#888] pl-2">System Color ...</td><td class="px-px"><button class="block h-4 w-full rounded-xs border-2 border-t border-l border-[#777] bg-linear-to-b from-[#f4f4f4] to-[#d6d6d6] leading-[13px]">Edit...</button></td></tr>
                <tr class="h-[18px] border-b border-dotted border-[#888]"><td class="border-r border-dotted border-[#888] pl-2">Default Analys...</td><td class="pl-[2px]">None</td></tr>
                <tr class="h-[18px] bg-[#d9d9d9]"><th colspan="2" class="pl-[2px] text-left font-normal"><span class="flex items-center justify-between pr-[6px]">Identity Data<svg width="6" height="8" fill="none" stroke="#000"><path d="M.5 3.500L3 1l2.500 2.500M.5 7.500L3 5l2.500 2.500"/></svg></span></th></tr>
                <tr class="h-[18px] border-b border-dotted border-[#888]"><td class="border-r border-dotted border-[#888] pl-2">View Template</td><td class="px-px"><button class="block h-4 w-full rounded-xs border-2 border-t border-l border-[#777] bg-linear-to-b from-[#f4f4f4] to-[#d6d6d6] leading-[13px]">Arch. Plan Pr</button></td></tr>
                <tr class="h-[18px] border-b border-dotted border-[#888]"><td class="border-r border-dotted border-[#888] pl-2">View Name</td><td class="pl-[2px]">2.K PÕRAND</td></tr>
                <tr class="h-[18px] border-b border-dotted border-[#888] text-[#7a7a7a]"><td class="border-r border-dotted border-[#888] pl-2">Dependency</td><td class="pl-[2px]">Independent</td></tr>
                <tr class="h-[18px] border-b border-dotted border-[#888]"><td class="border-r border-dotted border-[#888] pl-2">Title on Sheet</td><td></td></tr>
                <tr class="h-[18px] border-b border-dotted border-[#888] text-[#7a7a7a]"><td class="border-r border-dotted border-[#888] pl-2">Referencing S...</td><td></td></tr>
                <tr class="h-[18px] border-b border-dotted border-[#888] text-[#7a7a7a]"><td class="border-r border-dotted border-[#888] pl-2">Referencing D...</td><td></td></tr>
                <tr class="h-[18px] bg-[#d9d9d9]"><th colspan="2" class="pl-[2px] text-left font-normal"><span class="flex items-center justify-between pr-[6px]">Extents<svg width="6" height="8" fill="none" stroke="#000"><path d="M.5 3.500L3 1l2.500 2.500M.5 7.500L3 5l2.500 2.500"/></svg></span></th></tr>
                <tr class="h-[18px] border-b border-dotted border-[#888]"><td class="border-r border-dotted border-[#888] pl-2"><label for="crop">Crop View</label></td><td class="pl-[3px]"><input id="crop" type="checkbox" class="block h-[13px] w-[13px] appearance-none border border-[#8e8f8f] bg-[#e4e6e8] shadow-[inset_0_0_0_2px_#f8f8f8]"></td></tr>
                <tr class="h-[18px] border-b border-dotted border-[#888]"><td class="border-r border-dotted border-[#888] pl-2"><label for="cropr">Crop Region V...</label></td><td class="pl-[3px]"><input id="cropr" type="checkbox" class="block h-[13px] w-[13px] appearance-none border border-[#8e8f8f] bg-[#e4e6e8] shadow-[inset_0_0_0_2px_#f8f8f8]"></td></tr>
                <tr class="h-[18px]"><td class="border-r border-dotted border-[#888] pl-2"><label for="anno">Annotation C...</label></td><td class="pl-[3px]"><input id="anno" type="checkbox" class="block h-[13px] w-[13px] appearance-none border border-[#8e8f8f] bg-[#e4e6e8] shadow-[inset_0_0_0_2px_#f8f8f8]"></td></tr>
              </tbody>
            </table>
          </div>
          <div class="flex w-4 flex-col items-center bg-[#ececec] pt-2 text-[#444]">
            <svg class="rotate-180" width="7" height="4"><use href="#dn"/></svg>
            <div class="mt-[88px] flex h-[112px] w-[15px] flex-col items-center justify-center gap-[2px] rounded-xs border border-[#979797] bg-linear-to-r from-[#f2f2f2] to-[#cbccce]"><span class="h-px w-[7px] bg-[#666]"></span><span class="h-px w-[7px] bg-[#666]"></span><span class="h-px w-[7px] bg-[#666]"></span></div>
            <svg class="mt-[70px]" width="7" height="4"><use href="#dn"/></svg>
          </div>
        </div>
        <div class="flex h-[25px] shrink-0 items-center justify-between pr-[20px] pl-[2px]"><a href="#" class="text-[#1a66c4] underline">Properties help</a><button disabled class="h-[21px] w-[73px] rounded-sm border border-[#bbb] bg-[#f4f4f4] text-[#8a8a8a]">Apply</button></div>
      </div>
    </section>

    <!-- Project browser -->
    <section class="mt-[6px] mb-[2px] flex min-h-0 flex-1 flex-col">
      <h2 class="flex h-[18px] shrink-0 items-center justify-between bg-[#bfcddb] px-1 text-[#46515c]">Project Browser - Pikk 25.rvt<button aria-label="Close browser" class="pr-px"><svg width="8" height="8"><path d="M1 1l6 6M7 1L1 7" stroke="#000" stroke-width="1.700"/></svg></button></h2>
      <div class="mt-[2px] flex min-h-0 flex-1 border-t border-l-2 border-[#777] bg-white text-black">
        <div class="relative min-w-0 flex-1 overflow-hidden pt-px">
          <svg class="absolute top-0 left-0" width="70" height="390" fill="none" stroke="#999" stroke-dasharray="1 1"><path d="M8.500 10v380M8.500 11.500h11M8.500 335.500h11M8.500 353.500h11M8.500 371.500h11M28.500 20v279M28.500 29.500h16M28.500 47.500h16M28.500 173.500h16M28.500 191.500h16M28.500 209.500h16M28.500 299.500h16M28.500 380v10M48.500 56v100M48.500 65.500h16M48.500 83.500h16M48.500 101.500h16M48.500 119.500h16M48.500 137.500h16M48.500 155.500h16M48.500 218v64M48.500 227.500h16M48.500 245.500h16M48.500 263.500h16M48.500 281.500h16M48.500 308v10M48.500 317.500h16"/></svg>
          <ul class="relative leading-[18px] whitespace-nowrap">
            <li class="flex h-[18px] items-center pl-1"><svg width="9" height="9"><use href="#minus"/></svg><svg class="ml-2 bg-white text-[#444]" width="14" height="14"><use href="#frame"/><rect x="3.500" y="3.500" width="7" height="7" rx="2" fill="url(#g)" stroke="#444"/></svg><span class="pl-[7px]">Views (all)</span></li>
            <li class="flex h-[18px] items-center pl-6"><svg width="9" height="9"><use href="#plus"/></svg><span class="pl-[13px]">Structural Plans</span></li>
            <li class="flex h-[18px] items-center pl-6"><svg width="9" height="9"><use href="#minus"/></svg><span class="pl-[13px]">Floor Plans</span></li>
            <li class="h-[18px] pl-[66px]">0-JOON</li>
            <li class="h-[18px] pl-[66px]">1.K LAGI</li>
            <li class="h-[18px] pl-[63px]"><b class="block h-[18px] w-[78px] bg-[#e0e0e0] pl-[3px]">2.K PÕRAND</b></li>
            <li class="h-[18px] pl-[66px]">2.LAGI</li>
            <li class="h-[18px] pl-[66px]">MAAPIND</li>
            <li class="h-[18px] pl-[66px]">Site</li>
            <li class="flex h-[18px] items-center pl-6"><svg width="9" height="9"><use href="#plus"/></svg><span class="pl-[13px]">Ceiling Plans</span></li>
            <li class="flex h-[18px] items-center pl-6"><svg width="9" height="9"><use href="#plus"/></svg><span class="pl-[13px]">3D Views</span></li>
            <li class="flex h-[18px] items-center pl-6"><svg width="9" height="9"><use href="#minus"/></svg><span class="pl-[13px]">Elevations (Filled arrow)</span></li>
            <li class="h-[18px] pl-[66px]">East</li>
            <li class="h-[18px] pl-[66px]">North</li>
            <li class="h-[18px] pl-[66px]">South</li>
            <li class="h-[18px] pl-[66px]">West</li>
            <li class="flex h-[18px] items-center pl-6"><svg width="9" height="9"><use href="#minus"/></svg><span class="pl-[13px]">Sections (Building Section)</span></li>
            <li class="h-[18px] pl-[66px]">Section 1</li>
            <li class="flex h-[18px] items-center pl-1"><svg width="9" height="9"><use href="#plus"/></svg><svg class="ml-[7px]" width="16" height="15"><path d="M.5.5h15v14H.5z" fill="#eee" stroke="#444"/><path d="M1 1h14v3H1z" fill="#5b6270"/><path d="M3 6h3v3H3zM3 11h3v2H3z" fill="#555"/><path d="M8 7.500h2m1 0h3M8 11.500h2m1 0h3" stroke="#444"/></svg><span class="pl-[6px]">Legends</span></li>
            <li class="flex h-[18px] items-center pl-1"><svg width="9" height="9"><use href="#plus"/></svg><svg class="ml-[7px]" width="15" height="13"><path d="M.5.5h14v12H.5z" fill="#f2f2f2" stroke="#444"/><path d="M1 1h13v2H1z" fill="#5b6270"/><path d="M1 6.500h13M1 9.500h13M5.500 3v9M9.500 3v9" stroke="#777"/></svg><span class="pl-[7px]">Schedules/Quantities</span></li>
            <li class="flex h-[18px] items-center pl-1"><svg width="9" height="9"><use href="#minus"/></svg><svg class="ml-[7px]" width="16" height="13" fill="#eee" stroke="#444"><path d="M.5.5h11l4 4v8H.5z"/><path d="M3 4h4v2h3v4H3zM11.500.5v4h4" fill="none"/></svg><span class="pl-[6px]">Sheets (all)</span></li>
            <li class="h-[18px] pl-[46px]">A - ETAASI plaan</li>
          </ul>
        </div>
        <div class="flex w-4 flex-col items-center bg-[#ececec] pt-2 text-[#444]">
          <svg class="rotate-180" width="7" height="4"><use href="#dn"/></svg>
          <div class="mt-[7px] flex h-[244px] w-[15px] flex-col items-center justify-center gap-[2px] rounded-xs border border-[#979797] bg-linear-to-r from-[#f2f2f2] to-[#cbccce]"><span class="h-px w-[7px] bg-[#666]"></span><span class="h-px w-[7px] bg-[#666]"></span><span class="h-px w-[7px] bg-[#666]"></span></div>
          <svg class="mt-auto mb-[5px]" width="7" height="4"><use href="#dn"/></svg>
        </div>
      </div>
    </section>
  </aside>

  <!-- Drawing area -->
  <section class="flex min-w-0 flex-1 flex-col border-l border-[#666] pb-[2px]">
    <div class="flex min-h-0 flex-1 border-t border-[#777]">
      <div class="relative min-w-0 flex-1 overflow-hidden bg-white">
        <svg class="h-full w-full" role="img" aria-label="Floor plan">
          <g transform="translate(-236 -166)" fill="none" stroke="#000" shape-rendering="crispEdges">
            <g stroke="#999" stroke-dasharray="17 9">
              <path d="M448.500 236.500H1358.500"/><path d="M448.500 972.500H1358.500"/><path d="M448.500 236.500V972.500" stroke-dashoffset="6"/><path d="M1358.500 236.500V972.500" stroke-dashoffset="6"/>
            </g>
            <g fill="#323232">
              <path d="M501.500 316.500h27v190h-27zM501.500 667.500h27v54h28v11h-28v160h-27zM618.500 721.500h152v-154h10v2h18v11h-18v160h-10v-8h-101v160h-10v-160h-41zM770.500 315.500h5v-27h45v31h-40v178h-10zM980.500 288.500h50v27h6v182h-11v-178h-45zM867.500 569.500h158v-2h11v325h-6v28h-44v-32h39v-308h-158zM770.500 785.500h10v103h45v32h-50v-28h-5zM1279.500 316.500h27v207h-27zM1279.500 684.500h27v208h-27z"/>
            </g>
            <path d="M501.500 288.500H1306.500M501.500 920.500H1306.500M501.500 288.500v632M1306.500 288.500v632M528.500 315.500h242M528.500 315.500v577M501.500 892.500h269M1036.500 315.500h243M1036.500 892.500h270M780.500 319.500h245M780.500 888.500h245M1279.500 523v161"/>
            <path fill="#fff" d="M497.500 506.500h4v161h-4zM1306.500 523.500h3v161h-3zM820.500 285.500h160v3h-160zM825.500 920.500h161v3h-161z"/>
            <path d="M505.500 506v161M508.500 511v150M512.500 506v161M505 511.500h7M505 557.500h7M505 562.500h7M505 611.500h7M505 615.500h7M505 661.500h7M1294.500 523v161M1298.500 529v148M1302.500 523v161M1294 529.500h8M1294 575.500h8M1294 579.500h8M1294 629.500h8M1294 633.500h8M1294 677.500h8"/>
            <path d="M820 292.500h160M825 296.500h150M820 299.500h160M825.500 292v7M871.500 292v7M876.500 292v7M925.500 292v7M929.500 292v7M975.500 292v7M825 908.500h161M830 912.500h150M825 915.500h161M830.500 908v7M876.500 908v7M881.500 908v7M930.500 908v7M934.500 908v7M980.500 908v7"/>
            <path stroke="#fff" d="M508.500 558v4M508.500 612v3M1298.500 576v3M1298.500 630v3M872 296.500h4M926 296.500h3M877 912.500h4M931 912.500h3"/>
            <path d="M770 497.500H701.500C703 538 728 565 770 567.500M1036 497.500h69.500C1104 538 1079 565 1036 567.500M798.500 580V649.500C840 648 866 617 867.500 580M556.500 732V794.500C592 793 617 765 618.500 732M770 740.500H726.500C727 768 745 785 770 785.500"/>
            <path d="M448.500 604.500H1358.500" stroke="#999" stroke-dasharray="17 9"/>
            <path stroke-dasharray="17 9" stroke-dashoffset="6" d="M528.500 389.500h242M1036.500 389.500h243M528.500 819.500h242M1036.500 819.500h243"/>
            <path d="M501.500 223v29M501.500 265v13M501.500 929v52M501.500 994v2M1306.500 223v29M1306.500 265v13M1306.500 929v52M1306.500 994v2M333 288.500h56M402 288.500h13M428 288.500h52M493 288.500h8M1313 288.500h13M1339 288.500h52M1404 288.500h13M1430 288.500h56M333 920.500h56M402 920.500h13M428 920.500h52M493 920.500h8M1313 920.500h13M1339 920.500h52M1404 920.500h13M1430 920.500h56"/>
            <path d="M1208.500 165V996M1472.500 284V925M1469 285l7 7M1469 917l7 7"/>
            <path d="M1205 166h4v4h-4z" fill="#000" stroke="none"/>
            <g shape-rendering="auto"><circle cx="1497.500" cy="288" r="11"/><circle cx="1497.500" cy="920" r="11"/></g>
          </g>
          <g transform="translate(-236 -166)" class="font-['Liberation_Sans',sans-serif] text-[10px]">
            <text x="621" y="385">1,6 m</text><text x="1129" y="385">1,6 m</text><text x="588" y="814">1,6 m</text><text x="1121" y="814">1,6 m</text>
            <text class="text-[15px]" x="1492" y="293">B</text><text class="text-[15px]" x="1492" y="925">A</text>
            <text class="text-[15px]" transform="translate(1465 620) rotate(-90)">7278</text>
          </g>
          <path transform="translate(-236 -166)" fill="none" stroke="#d8131b" stroke-width="2" stroke-linecap="round" stroke-linejoin="round" d="M539 258C530 258 528 260 525 262C517 268 508 269 501 273C494 276 486 278 481 281C476 284 468 289 465 292C462 300 464 308 468.600 317C471 322 474 326 479 330C484 335 493 341 501 345C510 350 519 353 528.600 355C540 359 550 361 562 363C573 366 585 368 597 369C608 370 620 370.500 632 370C645 370 660 369 673 368C685 367 694 365 705 363C717 361 730 362 742 361C756 359 769 357 781 354C786 352 791 348 795 348C799 348 803 349 806 346C809 342 809 340 810 337C812 333 813 330 812.700 327C811 320 810 315 807 308C804 301 801 296 797 293C793 289 788 287 783 285C777 283 772 283 766 282C758 280 751 278 744 278C735 279 727 281 718 281C709 281 702 280 693 279C685 278 677 276 669 274C659 271 650 270 640 269C632 267 624 267 615 268C603 268 590 269 579 271C573 272 568 275 562 275C555 276 548 276 542 275C539 272 539 270 537 269C534 266 532 264 530 262"/>
        </svg>
        <div class="absolute top-2 right-1 flex items-end gap-[7px]">
          <button aria-label="Minimize view" class="pb-px"><svg width="12" height="4"><path d="M.5.5h11v3H.5z" fill="#fff" stroke="#444"/></svg></button>
          <button aria-label="Restore view"><svg width="11" height="12" fill="#fff" stroke="#444"><path d="M3.500 1.500h7v8h-7zM.5 3.500h7v8h-7zM2.500 6.500h3v3h-3z"/></svg></button>
          <button aria-label="Close view"><svg width="12" height="12"><path d="M2 2l8 8M10 2l-8 8" stroke="#444" stroke-width="4"/><path d="M2 2l8 8M10 2l-8 8" stroke="#fff" stroke-width="1.500"/></svg></button>
        </div>
        <div class="absolute top-7 right-[2px] flex h-[118px] w-[35px] flex-col items-center rounded-lg border-2 border-[#bdbdbd] bg-[#f4f4f4] text-[#999]">
          <button aria-label="Close navigation bar" class="mt-[2px] mr-[2px] self-end"><svg width="8" height="8" fill="none" stroke="#aaa"><circle cx="4" cy="4" r="3.500"/><path d="M2.500 2.500l3 3M5.500 2.500l-3 3"/></svg></button>
          <button aria-label="Steering wheel" class="mt-[9px]"><svg width="24" height="24" fill="none" stroke="#aaa"><path d="M1 10c0-6 4-9 9-9h9v10c0 5-4 8-9 8s-9-4-9-9z" fill="#f2f2f2" stroke-width="1.500"/><circle cx="10" cy="10" r="5"/><text x="11" y="22" fill="#6f93c4" stroke="none" font-size="9" font-weight="bold">2D</text></svg></button>
          <svg class="mt-[6px]" width="6" height="3"><use href="#dn"/></svg>
          <span class="mt-1 h-px w-[26px] bg-[#bbb]"></span>
          <button aria-label="Zoom" class="mt-2"><svg width="17" height="17"><path d="M1.500 1.500h10v11h-10z" fill="#a5d394" stroke="#8ab87c"/><circle cx="11" cy="11" r="3.500" fill="#f4f4f4" stroke="#888"/><path d="M13 13l4 4" stroke="#888" stroke-width="1.500"/></svg></button>
          <svg class="mt-[9px]" width="6" height="3"><use href="#dn"/></svg>
          <button aria-label="Navigation options" class="mt-auto mr-[2px] mb-[2px] self-end"><svg width="8" height="8" fill="none" stroke="#aaa"><circle cx="4" cy="4" r="3.500"/><path d="M2 4.500h4"/></svg></button>
        </div>
      </div>
      <div class="flex w-[10px] shrink-0 flex-col items-end overflow-hidden bg-[#ececec] pt-[7px] text-[#333]">
        <svg class="-mr-[2px] shrink-0 rotate-180" width="7" height="4"><use href="#dn"/></svg>
        <div class="mt-[396px] h-[15px] w-[9px] shrink-0 border border-[#979797] bg-[#eee]"></div>
        <svg class="-mr-[2px] mt-auto mb-2 shrink-0" width="7" height="4"><use href="#dn"/></svg>
      </div>
    </div>
    <!-- View control bar -->
    <div class="flex h-[17px] shrink-0 items-center bg-[#f0f0f0] pl-7">
      <button class="w-[51px] text-left text-black">1 : 50</button>
      <button aria-label="Detail level" class="w-[22px]"><svg width="16" height="12"><path d="M.5.5h15v11H.5z" fill="#eceff5" stroke="#444"/></svg></button>
      <button aria-label="Visual style" class="w-[20px]"><svg width="16" height="12" fill="#eee" stroke="#444"><path d="M1 4l4-3.500h10v7L11 11.500H1zM1 4h10v7.500M11 4l4-3.500M5 .5v7h10M1 11.500l4-4"/></svg></button>
      <button aria-label="Sun path" class="w-[22px]"><svg width="16" height="13"><path d="M4 6h6M7 0v12M2 1l9 10M11 1l-9 10" stroke="#aaa" stroke-dasharray="2 1"/><path d="M9 7l5 5M14 7l-5 5" stroke="#999" stroke-width="1.500"/></svg></button>
      <button aria-label="Shadows" class="w-5"><svg width="15" height="13"><circle cx="6" cy="5" r="4" fill="none" stroke="#bbb"/><path d="M2 12h8" stroke="#bbb"/><path d="M8 7l5 5M13 7l-5 5" stroke="#aaa" stroke-width="1.500"/></svg></button>
      <button aria-label="Crop view" class="w-[21px]"><svg width="17" height="13"><path d="M0 9h3M3 3h10M4 1v11M7 12V6h5" fill="none" stroke="#23569f" stroke-width="1.600"/><path d="M9 5l6 7M15 5l-6 7" stroke="#d21c1c" stroke-width="2.200"/></svg></button>
      <button aria-label="Crop region" class="w-[21px]"><svg width="17" height="13" fill="none"><path d="M0 9h3M3 2h8M4 1v11M7 12V6h3" stroke="#23569f" stroke-width="1.600"/><path d="M7 9h4" stroke="#c2488b"/><circle cx="13" cy="5" r="2.500" fill="#dff0ff" stroke="#2a79c9"/><path d="M13 8v4" stroke="#555" stroke-width="2"/></svg></button>
      <button aria-label="Temporary hide" class="w-[25px]"><svg width="17" height="12" fill="#eee" stroke="#444"><path d="M1 1c2 0 3 1 4 3l4 1 6-3M3 4c-1 3 2 6 4 4 1-1 1-2 1-3M9 5c0 4 2 6 5 4 2-2 2-5-1-6" stroke-width="1.300"/></svg></button>
      <button aria-label="Reveal hidden" class="w-[18px]"><svg width="8" height="12"><circle cx="4" cy="4" r="2.500" fill="#dff0ff" stroke="#2a79c9"/><path d="M4 7v4" stroke="#555" stroke-width="2"/></svg></button>
      <button aria-label="View properties" class="w-5"><svg width="15" height="13" fill="none" stroke="#111"><path d="M1.500 2.500h11v9h-11z" stroke-dasharray="3 1" stroke-width="1.500"/><path d="M7.500 6.500h6v5h-6z" fill="#fff"/><circle cx="10.500" cy="9" r="1"/></svg></button>
      <button aria-label="Analytical model" class="w-6"><svg width="15" height="13" fill="none" stroke="#aaa"><path d="M.5 4l4-3h9v7M.5 4h9v8h-9zM3.500 4v8M6.500 4v8M.5 8h9"/></svg></button>
      <div class="flex h-full flex-1 items-center bg-[#ececec] text-[#333]">
        <svg width="4" height="8"><path d="M4 0v8L0 4z" fill="#333"/></svg>
        <div class="ml-[672px] h-[15px] w-[15px] rounded-xs border border-[#888] bg-linear-to-b from-[#f4f4f4] to-[#ccc]"></div>
        <svg class="mr-[18px] ml-auto" width="4" height="8"><path d="M0 0l4 4-4 4z" fill="#333"/></svg>
      </div>
    </div>
  </section>
</main>

<!-- Status bar -->
<footer class="flex h-[23px] shrink-0 items-center border-t border-[#999] bg-linear-to-b from-[#e6e6e6] to-[#c4c4c4] pl-[2px]">
  <span class="w-[979px] text-[#111]">Click to select, TAB for alternates, CTRL adds, SHIFT unselects.</span>
  <button aria-label="Worksets" class="w-6"><svg width="16" height="16"><path d="M1 8l4-2 3 2v6l-3 1-4-1z" fill="#aed4ef" stroke="#2a6ea8"/><path d="M6 5c0-4 6-4 6 0" fill="none" stroke="#3c9440" stroke-width="2"/><path d="M10 6v9M14 6v9" stroke="#45607f" stroke-width="2"/></svg></button>
  <select aria-label="Active workset" class="h-[19px] w-[204px] appearance-none bg-white"><option></option></select><svg class="-ml-[11px] text-[#888]" width="7" height="4"><use href="#dn"/></svg>
  <button class="ml-3 flex h-[19px] w-[50px] items-center gap-1 bg-[#d0d0d0] text-[#111]"><svg width="16" height="16"><path d="M4 1h10v6H9v3H6L3 15l-2-1 3-5V1z" fill="#c2c2c2" stroke="#888"/></svg>:0</button>
  <button aria-label="Design options" class="ml-1 w-[27px]"><svg width="16" height="16" fill="#fff" stroke="#333a48"><path d="M.5 1.500h15v14H.5z"/><path d="M1 3h14" stroke-width="2"/><path d="M4 6.500h4M4 6v7M4 9.500h3M4 12.500h3M9 6.500h4M9 9.500h4M9 12.500h4"/></svg></button>
  <button aria-label="Add to set" class="w-5"><svg width="15" height="16"><path d="M3 1h11v14H3z" fill="#a9a9a9"/><path d="M0 8h6V5l4 4-4 4v-3H0z" fill="#ddd" stroke="#888"/></svg></button>
  <select aria-label="Design option" class="ml-px h-[19px] w-[154px] appearance-none bg-white pl-[2px] text-[#8a8a8a]"><option>Main Model</option></select><svg class="-ml-[11px] text-[#888]" width="7" height="4"><use href="#dn"/></svg>
  <div class="mr-[57px] ml-auto flex items-center gap-[2px] text-[#111]">
    <button aria-label="Select links" class="flex h-[19px] w-6 items-center justify-center bg-[#d0d0d0]"><svg width="17" height="17"><path d="M1 3h5v4H1zM9 3h5v4H9zM5 5h5" fill="#ffe36b" stroke="#b48a1a" stroke-width="1.500"/><use href="#cursor" x="7" y="3" width="9" height="14"/></svg></button>
    <button aria-label="Select underlay" class="flex h-[19px] w-6 items-center justify-center bg-[#d0d0d0]"><svg width="17" height="17"><path d="M5 2h9l-3 4H2zM5 8h9l-3 4H2z" fill="#d5e8fa" stroke="#2a79c9"/><use href="#cursor" x="7" y="3" width="9" height="14"/></svg></button>
    <button aria-label="Select pinned" class="flex h-[19px] w-6 items-center justify-center bg-[#d0d0d0]"><svg width="17" height="17"><path d="M3 1h8v3l-1 1v3l2 2H2l2-2V5L3 4zM7 10v5" fill="#f0894a" stroke="#b4501a"/><use href="#cursor" x="7" y="3" width="9" height="14"/></svg></button>
    <button aria-label="Select by face" class="flex h-[19px] w-6 items-center justify-center bg-[#d0d0d0]"><svg width="17" height="17"><path d="M1 4l5-3v12l-5 3z" fill="#a9d4f4" stroke="#2a79c9"/><path d="M9 1l5 5M14 1L9 6" stroke="#d21c1c" stroke-width="2"/><use href="#cursor" x="7" y="3" width="9" height="14"/></svg></button>
    <button aria-label="Drag elements" class="flex h-[19px] w-6 items-center justify-center bg-[#d0d0d0]"><svg width="17" height="17"><path d="M0 5h10M5 0v10M3 2l2-2 2 2M3 8l2 2 2-2" fill="none" stroke="#222"/><use href="#cursor" x="7" y="3" width="9" height="14"/></svg></button>
    <button class="flex items-center gap-[2px]"><svg width="17" height="16"><path d="M1 1h14l-5 7v7H7V8z" fill="url(#g)" stroke="#333"/></svg>:0</button>
  </div>
</footer>
<div class="h-1 shrink-0 border-t border-[#1f2a33] bg-[#46555e]"></div>
</body>
</html>
